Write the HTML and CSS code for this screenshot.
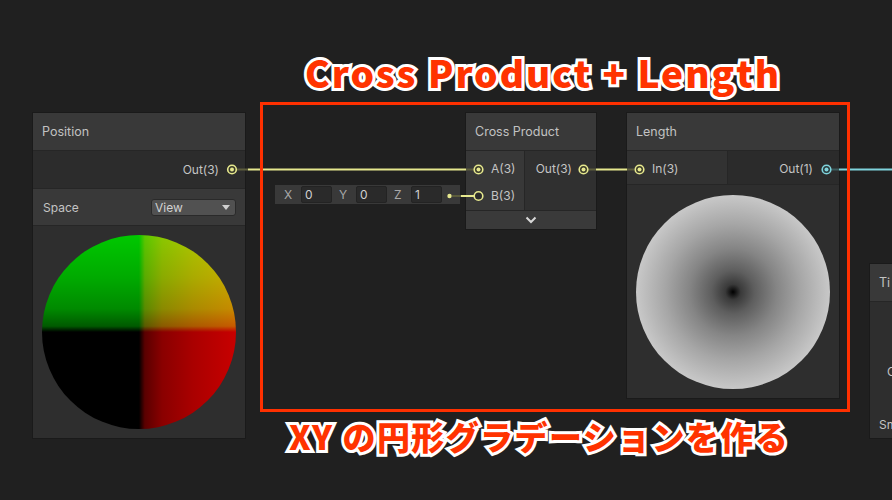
FILE: index.html
```html
<!DOCTYPE html>
<html>
<head>
<meta charset="utf-8">
<link rel="stylesheet" href="styles.css">
</head>
<body>
<div class="canvas">
  <div class="node node-position">
    <div class="node-header">Position</div>
    <div class="row-ports single">
      <div class="port-out"><span>Out(3)</span></div>
    </div>
    <div class="row-setting">
      <span>Space</span>
      <div class="dropdown"><span>View</span><span class="tri"></span></div>
    </div>
    <div class="preview">
      <div class="disc disc-position"></div>
    </div>
  </div>

  <div class="vec-input">
    <span class="axis">X</span><span class="field">0</span>
    <span class="axis">Y</span><span class="field">0</span>
    <span class="axis">Z</span><span class="field">1</span>
  </div>

  <div class="node node-cross">
    <div class="node-header">Cross Product</div>
    <div class="row-ports split">
      <div class="col-in">
        <div class="lbl">A(3)</div>
        <div class="lbl">B(3)</div>
      </div>
      <div class="col-out">
        <div class="lbl">Out(3)</div>
      </div>
    </div>
    <div class="collapse">
      <svg width="12" height="8" viewBox="0 0 12 8"><path d="M1.5 1.5 L6 6 L10.5 1.5" fill="none" stroke="#d8d8d8" stroke-width="2"/></svg>
    </div>
  </div>

  <div class="node node-length">
    <div class="node-header">Length</div>
    <div class="row-ports split short">
      <div class="col-in wide">
        <div class="lbl">In(3)</div>
      </div>
      <div class="col-out wide">
        <div class="lbl">Out(1)</div>
      </div>
    </div>
    <div class="preview">
      <div class="disc disc-length"></div>
    </div>
  </div>

  <div class="node node-partial">
    <div class="node-header">Ti</div>
    <div class="partial-body">
      <span class="p1">C</span>
      <span class="p2">Sm</span>
    </div>
  </div>

  <svg class="wires" width="892" height="500" viewBox="0 0 892 500">
    <g stroke-width="2" fill="none">
      <line x1="237" y1="169.5" x2="248" y2="169.5" stroke="#5c5c3c"/>
      <line x1="248" y1="169.5" x2="466" y2="169.5" stroke="#e6e88e"/>
      <line x1="466" y1="169.5" x2="474" y2="169.5" stroke="#5c5c3c"/>
      <line x1="452" y1="196" x2="461" y2="196" stroke="#5c5c3c"/>
      <line x1="461" y1="196" x2="474" y2="196" stroke="#e6e88e"/>
      <line x1="588" y1="169.5" x2="596" y2="169.5" stroke="#5c5c3c"/>
      <line x1="596" y1="169.5" x2="627" y2="169.5" stroke="#e6e88e"/>
      <line x1="627" y1="169.5" x2="634" y2="169.5" stroke="#5c5c3c"/>
      <line x1="831" y1="169.5" x2="839" y2="169.5" stroke="#3c5c5e"/>
      <line x1="839" y1="169.5" x2="892" y2="169.5" stroke="#7fd3dc"/>
    </g>
    <g>
      <circle cx="232" cy="169.5" r="4.3" fill="#3a3a2a" stroke="#e6e88e" stroke-width="1.6"/>
      <circle cx="232" cy="169.5" r="2" fill="#e6e88e"/>
      <circle cx="478.5" cy="169.5" r="4.3" fill="#3a3a2a" stroke="#e6e88e" stroke-width="1.6"/>
      <circle cx="478.5" cy="169.5" r="2" fill="#e6e88e"/>
      <circle cx="478.5" cy="196" r="4.3" fill="#2a2a2a" stroke="#e6e88e" stroke-width="1.6"/>
      <circle cx="449.5" cy="196" r="2.2" fill="#e6e88e"/>
      <circle cx="583.5" cy="169.5" r="4.3" fill="#3a3a2a" stroke="#e6e88e" stroke-width="1.6"/>
      <circle cx="583.5" cy="169.5" r="2" fill="#e6e88e"/>
      <circle cx="639.5" cy="169.5" r="4.3" fill="#3a3a2a" stroke="#e6e88e" stroke-width="1.6"/>
      <circle cx="639.5" cy="169.5" r="2" fill="#e6e88e"/>
      <circle cx="826.5" cy="169.5" r="4.3" fill="#2a3a3c" stroke="#7fd3dc" stroke-width="1.6"/>
      <circle cx="826.5" cy="169.5" r="2" fill="#7fd3dc"/>
    </g>
  </svg>

  <div class="highlight"></div>
  <div class="caption caption-top">Cross Product + Length</div>
  <div class="caption caption-bottom">XY の円形グラデーションを作る</div>
</div>
</body>
</html>
```

FILE: styles.css
```css
html, body {
  margin: 0;
  padding: 0;
  background: #202020;
}
body {
  font-family: Inter, "Noto Sans", sans-serif;
  font-size: 12px;
  color: #c4c4c4;
}
.canvas {
  position: relative;
  width: 892px;
  height: 500px;
  overflow: hidden;
  background: #202020;
}
.node {
  position: absolute;
  display: flex;
  flex-direction: column;
  background: #2e2e2e;
  box-shadow: 0 0 0 1px #1a1a1a;
}
.node-header {
  height: 38px;
  flex: none;
  display: flex;
  align-items: center;
  padding-left: 9px;
  background: #393939;
  color: #c2c2c2;
  font-size: 12.5px;
  border-bottom: 1px solid #262626;
  box-sizing: border-box;
}
.node-position { left: 33px; top: 113px; width: 212px; height: 325px; }
.node-cross { left: 466px; top: 113px; width: 130px; height: 116px; }
.node-length { left: 627px; top: 113px; width: 212px; height: 285px; }
.node-partial { left: 870px; top: 264px; width: 60px; height: 174px; }

.row-ports.single {
  height: 37px;
  flex: none;
  background: #2c2c2c;
  display: flex;
  align-items: center;
  justify-content: flex-end;
  padding-right: 26px;
}
.row-setting {
  height: 38px;
  flex: none;
  box-sizing: border-box;
  background: #393939;
  border-top: 1px solid #262626;
  border-bottom: 1px solid #262626;
  display: flex;
  align-items: center;
  justify-content: space-between;
  padding: 0 9px 0 10px;
}
.dropdown {
  width: 85px;
  height: 17px;
  box-sizing: border-box;
  background: #515151;
  border: 1px solid #2a2a2a;
  border-radius: 3px;
  display: flex;
  align-items: center;
  justify-content: space-between;
  padding: 0 5px 0 3px;
  color: #d2d2d2;
}
.tri {
  width: 0;
  height: 0;
  border-left: 4px solid transparent;
  border-right: 4px solid transparent;
  border-top: 5px solid #d0d0d0;
}
.preview {
  flex: 1;
  display: flex;
  align-items: center;
  justify-content: center;
  background: #2e2e2e;
}
.disc {
  width: 194px;
  height: 194px;
  border-radius: 50%;
}
.disc-position {
  background:
    linear-gradient(to right, #000 50%, #5a0000 53%, #8a0000 62%, #aa0000 78%, #c80000 100%),
    linear-gradient(to top, #000 50%, #005a00 53%, #008a00 62%, #00aa00 78%, #00c800 100%);
  background-blend-mode: screen;
}
.disc-length {
  background: radial-gradient(circle closest-side, #000 0%, #3a3a3a 8%, #5e5e5e 22%, #858585 45%, #a6a6a6 70%, #c8c8c8 100%);
}
.row-ports.split {
  height: 60px;
  flex: none;
  display: flex;
  border-bottom: 1px solid #262626;
  box-sizing: border-box;
}
.row-ports.short { height: 34px; }
.col-in {
  width: 59px;
  background: #383838;
  border-right: 1px solid #262626;
  display: flex;
  flex-direction: column;
  padding: 10px 0 0 25px;
  box-sizing: border-box;
  gap: 12px;
}
.col-out {
  flex: 1;
  background: #303030;
  display: flex;
  flex-direction: column;
  align-items: flex-end;
  padding: 10px 24px 0 0;
  box-sizing: border-box;
}
.col-in.wide {
  width: 101px;
  background: #323232;
  padding-left: 25px;
}
.col-out.wide { background: #2b2b2b; padding-right: 26px; }
.lbl { line-height: 15px; }
.collapse {
  flex: 1;
  background: #3a3a3a;
  display: flex;
  align-items: center;
  justify-content: center;
}
.vec-input {
  position: absolute;
  left: 275px;
  top: 185px;
  width: 185px;
  height: 19px;
  background: #393939;
  display: flex;
  align-items: center;
  padding-left: 9px;
  box-sizing: border-box;
  color: #a8a8a8;
}
.axis { width: 17px; }
.field {
  width: 31px;
  height: 17px;
  box-sizing: border-box;
  background: #2a2a2a;
  border: 1px solid #232323;
  border-radius: 2px;
  padding-left: 3px;
  line-height: 15px;
  color: #d0d0d0;
  margin-right: 7px;
}
.partial-body {
  flex: 1;
  display: flex;
  flex-direction: column;
  padding-top: 62px;
  gap: 38px;
}
.p1 { padding-left: 17px; line-height: 15px; }
.p2 { padding-left: 9px; line-height: 15px; }
.wires {
  position: absolute;
  left: 0;
  top: 0;
  pointer-events: none;
}
.highlight {
  position: absolute;
  left: 260px;
  top: 102px;
  width: 590px;
  height: 310px;
  box-sizing: border-box;
  border: 3px solid #ff3000;
}
.caption {
  position: absolute;
  font-family: "Noto Sans CJK JP", "Noto Sans", sans-serif;
  font-weight: 900;
  color: #ff3300;
  -webkit-text-stroke: 6px #ffffff;
  paint-order: stroke fill;
  white-space: nowrap;
  line-height: 1;
}
.caption-top {
  left: 305px;
  top: 54px;
  font-size: 37px;
  letter-spacing: 2px;
}
.caption-bottom {
  left: 289px;
  top: 420px;
  font-size: 33px;
  letter-spacing: 1.4px;
}
```
